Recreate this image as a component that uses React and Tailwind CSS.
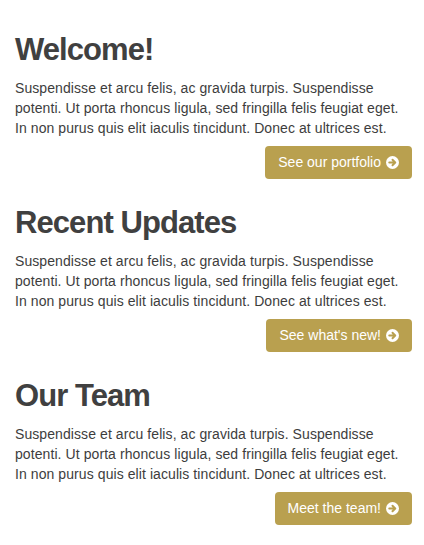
import React from "react";

const text =
  "Suspendisse et arcu felis, ac gravida turpis. Suspendisse potenti. Ut porta rhoncus ligula, sed fringilla felis feugiat eget. In non purus quis elit iaculis tincidunt. Donec at ultrices est.";

function ArrowCircle() {
  return (
    <svg width="13" height="13" viewBox="0 0 16 16" className="shrink-0">
      <circle cx="8" cy="8" r="8" fill="#ffffff" />
      <path
        d="M4 8h7M8 4.6L11.4 8 8 11.4"
        fill="none"
        stroke="#b9a04f"
        strokeWidth="2.4"
        strokeLinecap="round"
        strokeLinejoin="round"
      />
    </svg>
  );
}

function Section({ title, button, first }) {
  return (
    <section className={first ? "" : "mt-[26px]"}>
      <h1 className="text-[31px] leading-[36px] font-bold tracking-[-0.03em] text-[#404040]">
        {title}
      </h1>
      <p className="mt-[10px] pr-[6px] text-[14px] leading-[20px] tracking-[0.08px] text-[#3d3d3d]">
        {text}
      </p>
      <div className="mt-[8px] flex justify-end">
        <button className="flex h-[33px] items-center gap-[5px] rounded-[4px] bg-[#b9a04f] px-[13px] text-[14px] text-white">
          <span>{button}</span>
          <ArrowCircle />
        </button>
      </div>
    </section>
  );
}

export default function App() {
  return (
    <div
      className="min-h-[545px] w-[424px] bg-white pl-[15px] pr-[12px] pt-[32px]"
      style={{ fontFamily: '"Liberation Sans", Arial, sans-serif' }}
    >
      <Section first title="Welcome!" button="See our portfolio" />
      <Section title="Recent Updates" button="See what's new!" />
      <Section title="Our Team" button="Meet the team!" />
    </div>
  );
}
